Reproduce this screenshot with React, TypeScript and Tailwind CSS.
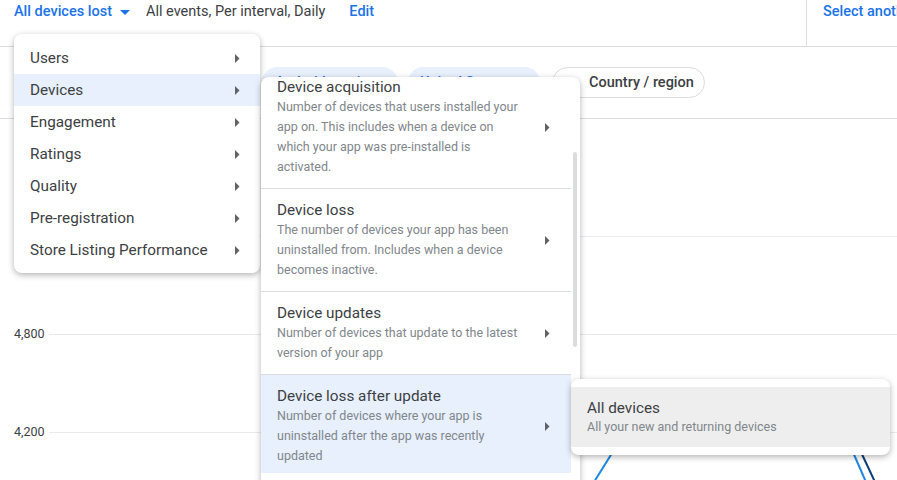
import React from "react";

const RightTri = () => (
  <svg width="5" height="9" viewBox="0 0 5 9" className="shrink-0">
    <polygon points="0,0 4.5,4.5 0,9" fill="#5f6368" />
  </svg>
);

const mainItems = [
  "Users",
  "Devices",
  "Engagement",
  "Ratings",
  "Quality",
  "Pre-registration",
  "Store Listing Performance",
];

const subItems = [
  {
    title: "Device acquisition",
    lines: [
      "Number of devices that users installed your",
      "app on. This includes when a device on",
      "which your app was pre-installed is",
      "activated.",
    ],
  },
  {
    title: "Device loss",
    lines: [
      "The number of devices your app has been",
      "uninstalled from. Includes when a device",
      "becomes inactive.",
    ],
  },
  {
    title: "Device updates",
    lines: ["Number of devices that update to the latest", "version of your app"],
  },
  {
    title: "Device loss after update",
    lines: [
      "Number of devices where your app is",
      "uninstalled after the app was recently",
      "updated",
    ],
    active: true,
  },
];

const gridRows = ["5,400", "4,800", "4,200"];

export default function App() {
  return (
    <div
      className="relative w-[897px] h-[480px] overflow-hidden bg-white text-[#3c4043]"
      style={{ fontFamily: "Roboto, 'Liberation Sans', sans-serif" }}
    >
      {/* header */}
      <div className="flex h-[47px] border-b border-[#dadce0]">
        <div className="flex flex-1 items-start pl-[14px] pt-[3px] text-[14.5px] leading-[18px]">
          <span className="font-medium text-[#1a73e8]">All devices lost</span>
          <svg width="10" height="5" viewBox="0 0 10 5" className="ml-[8px] mt-[7px]">
            <polygon points="0,0 10,0 5,5" fill="#1a73e8" />
          </svg>
          <span className="ml-[16px]">All events, Per interval, Daily</span>
          <span className="ml-[24px] font-medium text-[#1a73e8]">Edit</span>
        </div>
        <div className="w-[91px] border-l border-[#dadce0] pl-[16px] pt-[3px] text-[14.5px] leading-[18px] font-medium text-[#1a73e8] whitespace-nowrap overflow-hidden">
          Select another metric
        </div>
      </div>

      {/* filter chips */}
      <div className="flex items-center gap-[10px] pl-[14px] pt-[20px] pb-[20px] border-b border-[#dadce0] text-[14.5px] font-medium">
        <div className="w-[238px] h-[31px] rounded-full bg-[#e8f0fe]" />
        <div className="w-[136px] h-[31px] rounded-full bg-[#e8f0fe] pl-[13px] flex items-center text-[#1a73e8] whitespace-nowrap overflow-hidden">
          Android version
        </div>
        <div className="w-[132px] h-[31px] rounded-full bg-[#e8f0fe] pl-[12px] flex items-center text-[#1a73e8] whitespace-nowrap overflow-hidden">
          United States
        </div>
        <div className="ml-[2px] w-[153px] h-[31px] rounded-full border border-[#dadce0] flex items-center pl-[12px] gap-[14px] text-[#3c4043]">
          <svg width="10" height="10" viewBox="0 0 10 10">
            <path d="M5 0v10M0 5h10" stroke="#3c4043" strokeWidth="2" />
          </svg>
          <span>Country / region</span>
        </div>
      </div>

      {/* chart */}
      <div className="relative pt-[107px] flex flex-col gap-[78px]">
        {gridRows.map((v) => (
          <div key={v} className="flex items-center h-[20px] pl-[14px]">
            <span className="w-[30px] text-right text-[12.5px] text-[#3c4043]">{v}</span>
            <div className="ml-[5px] flex-1 h-px bg-[#e8eaed]" />
          </div>
        ))}
      </div>
      <svg
        className="absolute left-0 top-0 pointer-events-none"
        width="897"
        height="480"
        viewBox="0 0 897 480"
      >
        <polyline points="594,482 614,450" fill="none" stroke="#1e88e5" strokeWidth="2" />
        <polyline points="852,450 866,482" fill="none" stroke="#1e88e5" strokeWidth="2" />
        <polyline points="860,450 875,482" fill="none" stroke="#0d3c7a" strokeWidth="2" />
      </svg>

      {/* main menu */}
      <div className="absolute left-[14px] top-[34px] w-[246px] rounded-lg bg-white pt-[8px] pb-[7px] shadow-[0_2px_6px_rgba(0,0,0,0.3)]">
        {mainItems.map((m) => (
          <div
            key={m}
            className={`flex h-[32px] items-center justify-between pl-[16px] pr-[20px] text-[15.3px] ${
              m === "Devices" ? "bg-[#e8f0fe]" : ""
            }`}
          >
            <span>{m}</span>
            <RightTri />
          </div>
        ))}
      </div>

      {/* devices submenu */}
      <div className="absolute left-[261px] top-[77px] w-[319px] h-[410px] overflow-hidden rounded-lg bg-white shadow-[0_2px_6px_rgba(0,0,0,0.3)]">
        <div className="-mt-[11px] w-[310px]">
          {subItems.map((s, i) => (
            <div
              key={s.title}
              className={`flex items-center pl-[16px] pr-[21px] pt-[11px] ${
                s.active ? "bg-[#e8f0fe] pb-[7px]" : "pb-[11px]"
              } ${i < subItems.length - 1 ? "border-b border-[#dadce0]" : ""}`}
            >
              <div className="flex-1">
                <div className="text-[15.3px] leading-[20px] text-[#3c4043]">{s.title}</div>
                <div className="text-[12.5px] leading-[20px] text-[#80868b]">
                  {s.lines.map((l) => (
                    <div key={l}>{l}</div>
                  ))}
                </div>
              </div>
              <RightTri />
            </div>
          ))}
        </div>
        <div className="absolute right-[3px] top-[75px] w-[4px] h-[195px] rounded-full bg-[#dadce0]" />
      </div>

      {/* third level */}
      <div className="absolute left-[571px] top-[379px] w-[319px] rounded-lg bg-white py-[8px] shadow-[0_2px_6px_rgba(0,0,0,0.3)]">
        <div className="bg-[#eeeeee] px-[16px] py-[11px]">
          <div className="text-[15.3px] leading-[20px] text-[#3c4043]">All devices</div>
          <div className="text-[12.5px] leading-[18px] text-[#80868b]">
            All your new and returning devices
          </div>
        </div>
      </div>
    </div>
  );
}
